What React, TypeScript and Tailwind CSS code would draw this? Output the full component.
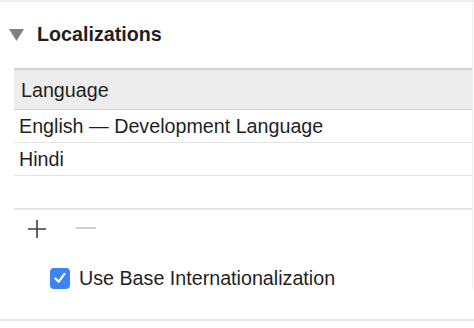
// Localizations panel (Xcode project settings style)

const rows = ['English — Development Language', 'Hindi'];

export default function App() {
  return (
    <div className="w-[474px] h-[328px] bg-white text-[#1f1f1f] font-['Liberation_Sans',Arial,sans-serif] text-[19.7px] leading-[24px] overflow-hidden">
      <div className="h-[2px] bg-[#efefef]" />
      <div className="w-[473px] border-r border-[#f0f0f0]">
        {/* section header */}
        <div className="flex items-center pt-[20px] pl-[9px]">
          <svg width="15" height="12" viewBox="0 0 15 12" className="mr-[13px] mt-[1px]">
            <path d="M0 0 H15 L7.5 12 Z" fill="#808080" />
          </svg>
          <span className="font-bold">Localizations</span>
        </div>

        {/* languages table */}
        <div className="ml-[14px] mt-[22px]">
          <div className="h-[42px] flex items-center pl-[7px] bg-[#ededed] border-t-2 border-b border-t-[#d2d2d2] border-b-[#cfcfcf]">
            Language
          </div>
          {rows.map(r => (
            <div key={r} className="h-[33px] flex items-center pl-[5px] border-b border-[#e4e4e4]">
              {r}
            </div>
          ))}
          <div className="h-[34px] border-b-2 border-[#e6e6e6]" />
        </div>

        {/* add / remove */}
        <div className="flex items-center h-[38px] pl-[27px] gap-[10px]">
          <svg width="20" height="20" viewBox="0 0 20 20">
            <path d="M10 1 V19 M1 10 H19" stroke="#3d3d3d" strokeWidth="1.6" />
          </svg>
          <svg width="20" height="20" viewBox="0 0 20 20" className="ml-[19px] -mt-[2px]">
            <path d="M0 10 H20" stroke="#c4c4c4" strokeWidth="1.6" />
          </svg>
        </div>

        {/* checkbox */}
        <div className="flex items-center pl-[50px] mt-[18px] h-[24px]">
          <div className="w-[20px] h-[21px] rounded-[4px] bg-[#3b84f5] flex items-center justify-center">
            <svg width="14" height="14" viewBox="0 0 14 14">
              <path d="M2.5 7.5 L5.6 10.8 L11.5 2.8" stroke="white" strokeWidth="2.2" fill="none" strokeLinecap="round" strokeLinejoin="round" />
            </svg>
          </div>
          <span className="ml-[9px]">Use Base Internationalization</span>
        </div>
      </div>
      <div className="mt-[29px] h-[2px] bg-[#e6e6e6]" />
    </div>
  );
}
